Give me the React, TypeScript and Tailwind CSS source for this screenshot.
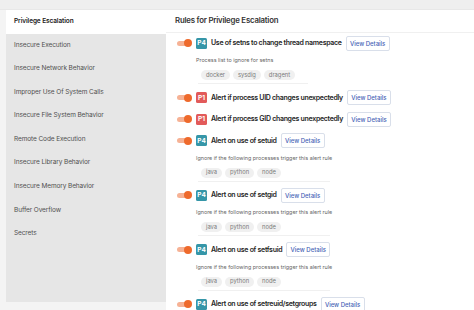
import React from "react";

const sidebar = [
  "Privilege Escalation",
  "Insecure Execution",
  "Insecure Network Behavior",
  "Improper Use Of System Calls",
  "Insecure File System Behavior",
  "Remote Code Execution",
  "Insecure Library Behavior",
  "Insecure Memory Behavior",
  "Buffer Overflow",
  "Secrets",
];

type Rule = {
  p: "P1" | "P4";
  title: string;
  sub?: string;
  tags?: string[];
  line?: number;
};

const rules: Rule[] = [
  {
    p: "P4",
    title: "Use of setns to change thread namespace",
    sub: "Process list to ignore for setns",
    tags: ["docker", "sysdig", "dragent"],
    line: 110,
  },
  { p: "P1", title: "Alert if process UID changes unexpectedly" },
  { p: "P1", title: "Alert if process GID changes unexpectedly" },
  {
    p: "P4",
    title: "Alert on use of setuid",
    sub: "Ignore if the following processes trigger this alert rule",
    tags: ["java", "python", "node"],
    line: 132,
  },
  {
    p: "P4",
    title: "Alert on use of setgid",
    sub: "Ignore if the following processes trigger this alert rule",
    tags: ["java", "python", "node"],
    line: 132,
  },
  {
    p: "P4",
    title: "Alert on use of setfsuid",
    sub: "Ignore if the following processes trigger this alert rule",
    tags: ["java", "python", "node"],
    line: 132,
  },
  { p: "P4", title: "Alert on use of setreuid/setgroups" },
];

function Toggle() {
  return (
    <div className="relative w-[15px] h-[8px] flex items-center">
      <div className="w-[13px] h-[5px] rounded-full bg-[#f6b295]" />
      <div className="absolute right-0 top-0 w-[8px] h-[8px] rounded-full bg-[#ee6a2c]" />
    </div>
  );
}

function Badge({ p }: { p: "P1" | "P4" }) {
  return (
    <div
      className={
        "w-[11px] h-[11px] rounded-[1.5px] flex items-center justify-center text-white text-[6.5px] font-bold leading-none " +
        (p === "P1" ? "bg-[#e25a5a]" : "bg-[#3596a8]")
      }
    >
      {p}
    </div>
  );
}

function RuleBlock({ r }: { r: Rule }) {
  return (
    <div className={r.sub ? "h-[54.5px]" : "h-[21.5px]"}>
      <div className="h-[21.5px] flex items-center gap-[4px]">
        <Toggle />
        <Badge p={r.p} />
        <span className="text-[7px] font-semibold text-[#1f1f1f] tracking-[-0.3px] whitespace-nowrap">
          {r.title}
        </span>
        <div className="h-[15px] w-[44px] flex items-center justify-center border border-[#d9dfea] rounded-[2px] text-[6px] font-medium text-[#4663b5] whitespace-nowrap">
          View Details
        </div>
      </div>
      {r.sub && (
        <div className="pl-[19px]">
          <div className="mt-[3px] h-[7px] flex items-center text-[5.4px] text-[#666] whitespace-nowrap">
            {r.sub}
          </div>
          <div
            className="mt-[6px] ml-[2px] pl-[3px] pb-[3px] border-b border-[#f0f0f0] flex gap-[3px]"
            style={{ width: r.line }}
          >
            {r.tags!.map((t) => (
              <div
                key={t}
                className="h-[10px] px-[5px] rounded-full bg-[#f0f0f0] flex items-center text-[5.8px] text-[#7a7a7a]"
              >
                {t}
              </div>
            ))}
          </div>
        </div>
      )}
    </div>
  );
}

export default function App() {
  return (
    <div
      className="w-[474px] h-[310px] overflow-hidden bg-[#f4f4f4]"
      style={{ fontFamily: "Inter, 'Noto Sans', sans-serif" }}
    >
      <div className="h-[10px] bg-[#efefef] border-b border-[#e8e8e8]" />
      <div className="flex h-[300px]">
        <div className="w-[6px] shrink-0" />
        <aside className="w-[160px] shrink-0 h-[292px] bg-[#e6e6e6] flex flex-col">
          {sidebar.map((s, i) => (
            <div
              key={s}
              className={
                "h-[23.6px] shrink-0 flex items-center pl-[8px] text-[6.5px] tracking-[-0.1px] whitespace-nowrap " +
                (i === 0
                  ? "bg-white font-semibold text-[#222]"
                  : "text-[#505050]")
              }
            >
              {s}
            </div>
          ))}
        </aside>
        <main className="flex-1 bg-white">
          <div className="h-[22.5px] border-b border-[#f0f0f0] flex items-center pl-[9px] text-[7.8px] font-semibold tracking-[-0.2px] text-[#333] whitespace-nowrap">
            Rules for Privilege Escalation
          </div>
          <div className="pl-[11px]">
            {rules.map((r, i) => (
              <RuleBlock key={i} r={r} />
            ))}
          </div>
        </main>
      </div>
    </div>
  );
}
